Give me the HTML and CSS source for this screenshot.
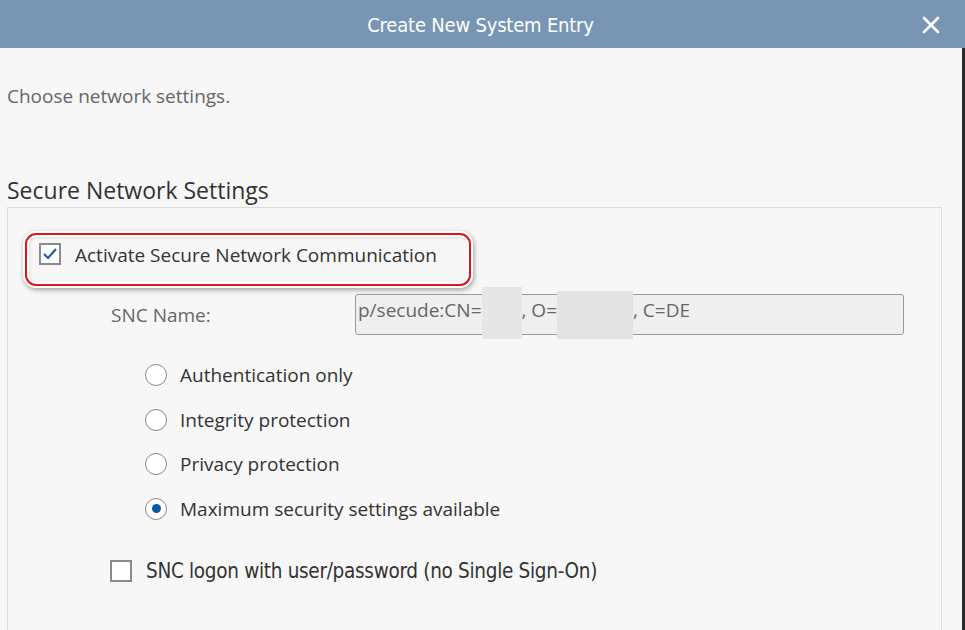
FILE: index.html
```html
<!DOCTYPE html>
<html lang="en">
<head>
    <meta charset="UTF-8">
    <meta name="viewport" content="width=device-width, initial-scale=1.0">
    <link rel="stylesheet" href="styles.css">
    <title>Create New System Entry</title>
</head>
<body>
    <div id="dialog">
        <div class="title-bar">
            <span class="title">Create New System Entry</span>
            <span class="close-btn">
                <svg width="18" height="18" viewBox="0 0 18 18">
                    <path d="M2 2 L16 16 M16 2 L2 16" stroke="#ffffff" stroke-width="2.6" stroke-linecap="round"/>
                </svg>
            </span>
        </div>

        <div class="content">
            <p class="intro">Choose network settings.</p>

            <h2>Secure Network Settings</h2>

            <div class="group-box">
                <div class="highlight">
                    <span class="check checked">
                        <svg width="16" height="14" viewBox="0 0 16 14">
                            <path d="M2 7 L6 11 L14 2" fill="none" stroke="#1f5fa8" stroke-width="2.2"/>
                        </svg>
                    </span>
                    <span class="check-label">Activate Secure Network Communication</span>
                </div>

                <div class="snc-row">
                    <label class="snc-label">SNC Name:</label>
                    <div class="snc-field">
                        p/secude:CN=<span class="blur blur-cn"></span>, O=<span class="blur blur-o"></span>, C=DE
                    </div>
                </div>

                <div class="radio-list">
                    <div class="radio-row"><span class="radio"></span>Authentication only</div>
                    <div class="radio-row"><span class="radio"></span>Integrity protection</div>
                    <div class="radio-row"><span class="radio"></span>Privacy protection</div>
                    <div class="radio-row"><span class="radio selected"></span>Maximum security settings available</div>
                </div>

                <div class="logon-row">
                    <span class="check"></span>
                    <span class="logon-label">SNC logon with user/password (no Single Sign-On)</span>
                </div>
            </div>
        </div>
    </div>
</body>
</html>
```

FILE: styles.css
```css
body {
    margin: 0;
    font-family: 'Open Sans', 'DejaVu Sans', sans-serif;
    background-color: #f7f7f7;
    height: 630px;
    overflow: hidden;
}

#dialog {
    height: 630px;
    box-sizing: border-box;
    border-right: 3px solid #2b2b2b;
    display: flex;
    flex-direction: column;
}

.title-bar {
    height: 48px;
    flex-shrink: 0;
    background-color: #7896b3;
    display: flex;
    align-items: center;
    justify-content: center;
    position: relative;
    margin-right: -3px;
}

.title {
    color: #ffffff;
    font-family: 'DejaVu Sans', sans-serif;
    font-stretch: condensed;
    font-size: 20px;
    letter-spacing: -0.2px;
    margin-top: 2px;
    margin-right: 4px;
}

.close-btn {
    position: absolute;
    right: 25px;
    top: 16px;
    width: 18px;
    height: 18px;
}

.content {
    flex: 1;
    display: flex;
    flex-direction: column;
    padding: 0 20px 0 7px;
    min-height: 0;
}

.intro {
    margin: 0;
    padding-top: 35px;
    font-size: 19px;
    line-height: 26px;
    color: #666666;
}

h2 {
    margin: 0;
    padding-top: 66px;
    font-size: 23px;
    font-weight: normal;
    color: #333333;
    line-height: 30px;
}

.group-box {
    flex: 1;
    margin-top: 2px;
    border: 1px solid #dddddd;
    border-bottom: none;
    padding: 25px 0 0 17px;
}

.highlight {
    width: 446px;
    height: 53px;
    box-sizing: border-box;
    border: 2px solid #e0141c;
    border-radius: 11px;
    box-shadow: 0 0 0 2px #ffffff, 1px 2px 5px 2px rgba(0, 0, 0, 0.35), inset 0 0 0 2px #ffffff, inset 1px 1px 4px rgba(0, 0, 0, 0.25);
    display: flex;
    align-items: flex-start;
    padding: 8px 0 0 12px;
    gap: 14px;
}

.check {
    width: 22px;
    height: 22px;
    box-sizing: border-box;
    border: 2px solid #8a8a8a;
    background-color: #ffffff;
    display: inline-flex;
    align-items: center;
    justify-content: center;
    flex-shrink: 0;
}

.check-label {
    font-size: 19px;
    line-height: 26px;
    margin-top: -1px;
    color: #333333;
}

.snc-row {
    display: flex;
    align-items: center;
    margin-top: 8px;
}

.snc-label {
    padding-left: 86px;
    font-size: 19px;
    color: #666666;
    box-sizing: border-box;
    width: 330px;
}

.snc-field {
    width: 549px;
    height: 41px;
    box-sizing: border-box;
    border: 1px solid #9a9a9a;
    border-radius: 3px;
    background-color: #efefef;
    font-size: 19px;
    color: #666666;
    padding: 2px 0 0 2px;
    line-height: 26px;
    white-space: nowrap;
}

.blur {
    display: inline-block;
    vertical-align: top;
    background-color: #e6e6e6;
    margin-top: -10px;
    height: 52px;
}

.blur-cn {
    width: 40px;
}

.blur-o {
    width: 76px;
    margin-top: -6px;
    height: 48px;
    background-color: #e3e3e3;
}

.radio-list {
    display: flex;
    flex-direction: column;
    margin-top: 18px;
    padding-left: 120px;
}

.radio-row {
    display: flex;
    align-items: center;
    height: 44.5px;
    gap: 13px;
    font-size: 19px;
    color: #333333;
}

.radio {
    width: 22px;
    height: 22px;
    box-sizing: border-box;
    border: 1.5px solid #8a8a8a;
    border-radius: 50%;
    background-color: #ffffff;
    display: inline-flex;
    align-items: center;
    justify-content: center;
}

.radio.selected::after {
    content: "";
    width: 9px;
    height: 9px;
    border-radius: 50%;
    background-color: #0b5aa6;
}

.logon-row {
    display: flex;
    align-items: center;
    height: 28px;
    gap: 14px;
    margin-top: 26px;
    padding-left: 85px;
}

.logon-label {
    font-family: 'DejaVu Sans', sans-serif;
    font-stretch: condensed;
    font-size: 20.5px;
    color: #333333;
    letter-spacing: -0.3px;
}
```
